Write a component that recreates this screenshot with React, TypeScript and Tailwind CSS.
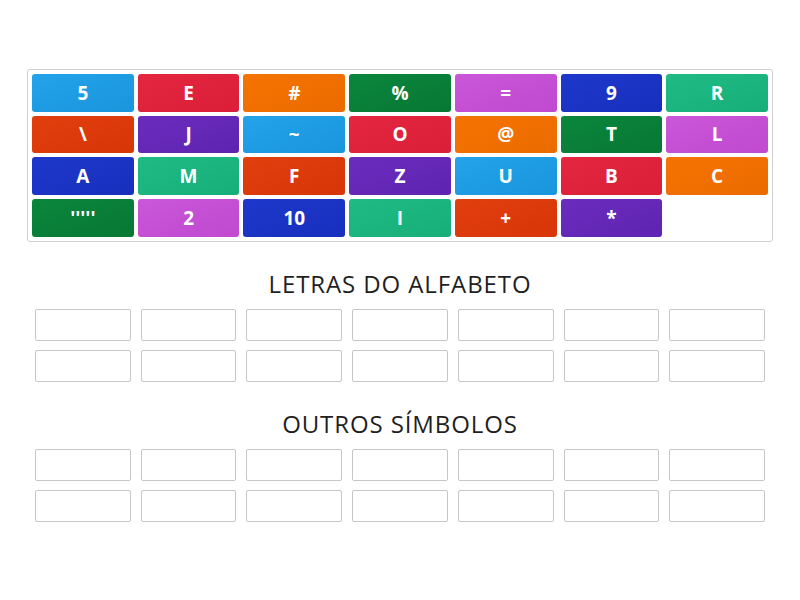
import React from "react";

// ─── Data ─────────────────────────────────────────────────────

type Tile = { label: string; color: string };

// each class written out in full so Tailwind picks it up
const COLORS = {
  sky: "bg-linear-to-br from-[#23a3ea] to-[#1995dc]",
  red: "bg-linear-to-br from-[#e4263f] to-[#db1f38]",
  orange: "bg-linear-to-br from-[#f47300] to-[#ec6b00]",
  green: "bg-linear-to-br from-[#0b863d] to-[#077834]",
  pink: "bg-linear-to-br from-[#ca56d8] to-[#c049d0]",
  navy: "bg-linear-to-br from-[#1d38cb] to-[#182fbd]",
  teal: "bg-linear-to-br from-[#1fbb84] to-[#17ae79]",
  rust: "bg-linear-to-br from-[#e13f0e] to-[#d83508]",
  purple: "bg-linear-to-br from-[#6a2cbd] to-[#5f23b1]",
};

const TILES: Tile[] = [
  { label: "5", color: COLORS.sky },
  { label: "E", color: COLORS.red },
  { label: "#", color: COLORS.orange },
  { label: "%", color: COLORS.green },
  { label: "=", color: COLORS.pink },
  { label: "9", color: COLORS.navy },
  { label: "R", color: COLORS.teal },

  { label: "\\", color: COLORS.rust },
  { label: "J", color: COLORS.purple },
  { label: "~", color: COLORS.sky },
  { label: "O", color: COLORS.red },
  { label: "@", color: COLORS.orange },
  { label: "T", color: COLORS.green },
  { label: "L", color: COLORS.pink },

  { label: "A", color: COLORS.navy },
  { label: "M", color: COLORS.teal },
  { label: "F", color: COLORS.rust },
  { label: "Z", color: COLORS.purple },
  { label: "U", color: COLORS.sky },
  { label: "B", color: COLORS.red },
  { label: "C", color: COLORS.orange },

  { label: "'''''", color: COLORS.green },
  { label: "2", color: COLORS.pink },
  { label: "10", color: COLORS.navy },
  { label: "I", color: COLORS.teal },
  { label: "+", color: COLORS.rust },
  { label: "*", color: COLORS.purple },
];

// ─── Pieces ───────────────────────────────────────────────────

function DropGroup({ title, top }: { title: string; top: string }) {
  return (
    <div className={top}>
      <h2 className="text-center text-[24px] leading-[32px] tracking-[0.9px] text-[#1f1f1f]">{title}</h2>
      <div className="mt-[9px] grid grid-cols-7 gap-x-[10px] gap-y-[9px] px-[8px]">
        {Array.from({ length: 14 }).map((_, i) => (
          <div key={i} className="h-[32px] rounded-[2px] border border-[#c6c6c6] bg-white" />
        ))}
      </div>
    </div>
  );
}

// ─── App ──────────────────────────────────────────────────────

export default function App() {
  return (
    <div
      className="min-h-[600px] w-full bg-white"
      style={{ fontFamily: '"Open Sans", "Noto Sans", sans-serif' }}
    >
      <div className="mx-auto w-[746px] pt-[69px]">
        {/* tile bank */}
        <div className="rounded-[3px] border border-[#cfcfcf] p-[4px]">
          <div className="grid grid-cols-7 gap-[4px]">
            {TILES.map((t, i) => (
              <div
                key={i}
                className={`${t.color} flex h-[37.7px] items-center justify-center rounded-[3px] text-[19px] font-bold text-white`}
              >
                {t.label}
              </div>
            ))}
          </div>
        </div>

        <DropGroup title="LETRAS DO ALFABETO" top="mt-[26px]" />
        <DropGroup title="OUTROS SÍMBOLOS" top="mt-[26px]" />
      </div>
    </div>
  );
}
